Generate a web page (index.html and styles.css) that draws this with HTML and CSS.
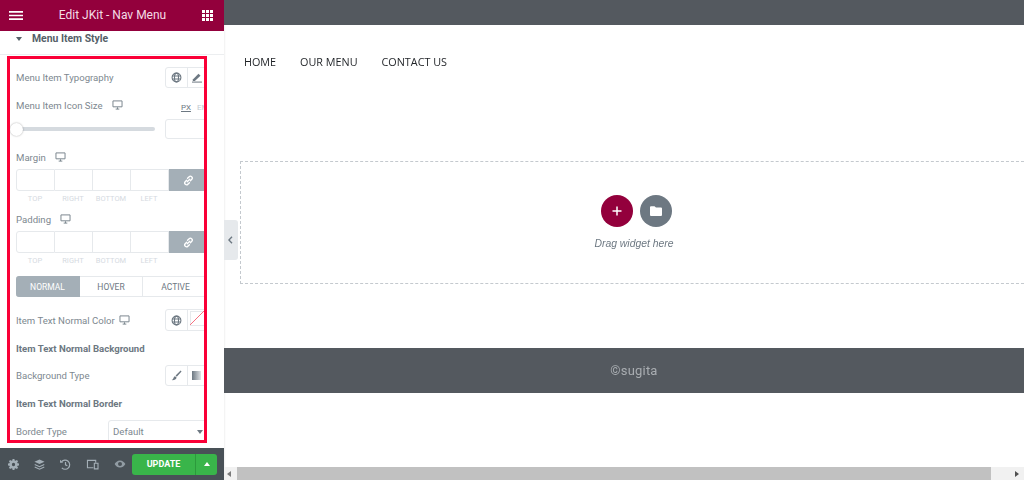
FILE: index.html
```html
<!DOCTYPE html>
<html lang="en">
<head>
<meta charset="utf-8">
<title>Edit JKit - Nav Menu</title>
<link rel="stylesheet" href="styles.css">
</head>
<body>
<svg class="defs" width="0" height="0" aria-hidden="true">
  <symbol id="i-monitor" viewBox="0 0 12 11"><path d="M1 1h10v6.5H1z" fill="none" stroke="currentColor" stroke-width="1.1"/><path d="M4 10h4M6 8v2" stroke="currentColor" stroke-width="1.1"/></symbol>
  <symbol id="i-globe" viewBox="0 0 12 12"><g fill="none" stroke="currentColor" stroke-width="1.2"><circle cx="6" cy="6" r="4.8"/><ellipse cx="6" cy="6" rx="2.2" ry="4.8"/><path d="M1.2 4.3h9.6M1.2 7.7h9.6"/></g></symbol>
  <symbol id="i-link" viewBox="0 0 12 12"><g fill="none" stroke="currentColor" stroke-width="1.5" stroke-linecap="round"><path d="M5 3.600 6.700 2a1.900 1.900 0 0 1 2.900 2.600L8 6.300"/><path d="M7 8.400 5.300 10a1.900 1.900 0 0 1-2.900-2.600L4 5.700"/><path d="M4.600 7.400 7.400 4.600"/></g></symbol>
</svg>
<div class="app">
  <aside class="panel">
    <header class="panel-head">
      <svg class="burger" viewBox="0 0 14 9" width="14" height="9"><path d="M0 .9h14M0 4.500h14M0 8.100h14" stroke="#fff" stroke-width="1.700"/></svg>
      <span class="panel-title">Edit JKit - Nav Menu</span>
      <svg class="apps" viewBox="0 0 11 11" width="11" height="11"><path fill="#fff" d="M0 0h3v3H0zM4 0h3v3H4zM8 0h3v3H8zM0 4h3v3H0zM4 4h3v3H4zM8 4h3v3H8zM0 8h3v3H0zM4 8h3v3H4zM8 8h3v3H8z"/></svg>
    </header>
    <div class="section-head"><span class="caret"></span><span>Menu Item Style</span></div>
    <div class="highlight">
      <div class="row row-typo">
        <span class="label">Menu Item Typography</span>
        <div class="btn-pair">
          <span class="pair-cell"><svg width="11" height="11"><use href="#i-globe"/></svg></span>
          <span class="pair-cell"><svg viewBox="0 0 12 12" width="10" height="11"><path d="M1 8.300 7.800 1.500l2.400 2.400L3.400 10.200H1z" fill="currentColor"/><path d="M0 11.500h12" stroke="currentColor" stroke-width="1.200"/></svg></span>
        </div>
      </div>
      <div class="row row-size">
        <span class="label">Menu Item Icon Size</span>
        <svg class="mon" width="11" height="10"><use href="#i-monitor"/></svg>
        <span class="units"><u>PX</u><span>EM</span></span>
      </div>
      <div class="row row-slider">
        <div class="slider"><span class="thumb"></span></div>
        <span class="num"></span>
      </div>
      <div class="row row-dim"><span class="label">Margin</span><svg class="mon" width="11" height="10"><use href="#i-monitor"/></svg></div>
      <div class="dims">
        <span class="dim"></span><span class="dim"></span><span class="dim"></span><span class="dim"></span>
        <span class="dim-link"><svg width="11" height="11"><use href="#i-link"/></svg></span>
      </div>
      <div class="dim-labels"><span>TOP</span><span>RIGHT</span><span>BOTTOM</span><span>LEFT</span></div>
      <div class="row row-dim row-pad"><span class="label">Padding</span><svg class="mon" width="11" height="10"><use href="#i-monitor"/></svg></div>
      <div class="dims">
        <span class="dim"></span><span class="dim"></span><span class="dim"></span><span class="dim"></span>
        <span class="dim-link"><svg width="11" height="11"><use href="#i-link"/></svg></span>
      </div>
      <div class="dim-labels"><span>TOP</span><span>RIGHT</span><span>BOTTOM</span><span>LEFT</span></div>
      <div class="tabs"><span class="tab tab-on">NORMAL</span><span class="tab tab-h">HOVER</span><span class="tab tab-a">ACTIVE</span></div>
      <div class="row row-color">
        <span class="label">Item Text Normal Color</span>
        <svg class="mon mon-tight" width="11" height="10"><use href="#i-monitor"/></svg>
        <div class="btn-pair">
          <span class="pair-cell"><svg width="11" height="11"><use href="#i-globe"/></svg></span>
          <span class="pair-cell pair-swatch"><svg viewBox="0 0 28 20" width="28" height="20"><rect x="2.500" y="1.500" width="30" height="14" fill="none" stroke="#e6e9ec"/><path d="M2 15 16 1" stroke="#f7707f" stroke-width="1"/></svg></span>
        </div>
      </div>
      <div class="subhead sub-bg">Item Text Normal Background</div>
      <div class="row row-bg">
        <span class="label">Background Type</span>
        <div class="btn-pair">
          <span class="pair-cell"><svg viewBox="0 0 12 12" width="11" height="11"><path d="M10.500.5 5 6l1.300 1.300L11.500 1.500zM.5 11c2.500.3 5.300-.3 5.600-2.800L4.400 6.700C2.500 7 3.300 9.800.5 11z" fill="currentColor"/></svg></span>
          <span class="pair-cell"><span class="grad"></span></span>
        </div>
      </div>
      <div class="subhead sub-border">Item Text Normal Border</div>
      <div class="row row-border">
        <span class="label">Border Type</span>
        <span class="select">Default<span class="select-caret"></span></span>
      </div>
    </div>
    <footer class="panel-foot">
      <svg class="fi fi-gear" viewBox="0 0 12 12" width="11" height="11"><path fill-rule="evenodd" d="M5 0h2l.3 1.600 1 .4L9.700 1.100 11 2.400 10 3.700l.4 1L12 5v2l-1.600.3-.4 1 1 1.300L9.700 11l-1.400-1-1 .4L7 12H5l-.3-1.600-1-.4L2.300 11 1 9.600l1-1.300-.4-1L0 7V5l1.600-.3.4-1-1-1.300L2.300 1.100 3.700 2l1-.4zM6 4.200a1.800 1.800 0 1 0 0 3.600 1.800 1.800 0 0 0 0-3.600z" fill="currentColor"/></svg>
      <svg class="fi" viewBox="0 0 12 12" width="11" height="11"><path d="M6 .5 11.500 3 6 5.500.5 3z" fill="currentColor"/><path d="M.8 6 6 8.400 11.200 6M.8 8.800 6 11.200l5.200-2.400" fill="none" stroke="currentColor" stroke-width="1.200"/></svg>
      <svg class="fi" viewBox="0 0 12 12" width="11" height="11"><g fill="none" stroke="currentColor" stroke-width="1.300"><path d="M1.700 3A5 5 0 1 1 2 9.700"/><path d="M6 3.200V6.300l2 1.100"/></g><path d="M0 .8v3.400h3.400z" fill="currentColor"/></svg>
      <svg class="fi" viewBox="0 0 14 12" width="13" height="11"><g fill="none" stroke="currentColor" stroke-width="1.200"><path d="M8 9.500H1.500v-8h9V4"/><path d="M9 4.600h4v6.200H9z"/></g></svg>
      <svg class="fi fi-eye" viewBox="0 0 14 10" width="12" height="8"><path fill-rule="evenodd" d="M7 .5C3.800.5 1.400 2.800.3 5c1.100 2.200 3.500 4.500 6.700 4.500S12.600 7.200 13.700 5C12.600 2.800 10.200.5 7 .5zm0 2a2.500 2.500 0 1 1 0 5 2.500 2.500 0 0 1 0-5z" fill="currentColor"/></svg>
      <div class="update"><span class="update-main">UPDATE</span><span class="update-more"><span class="up-caret"></span></span></div>
    </footer>
  </aside>
  <main class="stage">
    <span class="collapse"><svg viewBox="0 0 5 8" width="5" height="8"><path d="M4 .8.900 4 4 7.200" fill="none" stroke="#6d7882" stroke-width="1.400"/></svg></span>
    <div class="canvas">
      <div class="topbar"></div>
      <nav class="nav"><a>HOME</a><a>OUR MENU</a><a>CONTACT US</a></nav>
      <section class="dropzone">
        <div class="drop-btns">
          <span class="round round-add"><svg viewBox="0 0 10 10" width="10" height="10"><path d="M5 .5v9M.5 5h9" stroke="#fff" stroke-width="1.500"/></svg></span>
          <span class="round round-tpl"><svg viewBox="0 0 12 10" width="12" height="10"><path d="M0 1.200A1 1 0 0 1 1 .2h3.500L6 1.600h5a1 1 0 0 1 1 1V9a1 1 0 0 1-1 1H1a1 1 0 0 1-1-1z" fill="#fff"/></svg></span>
        </div>
        <div class="drop-text">Drag widget here</div>
      </section>
      <div class="sitefoot">©sugita</div>
    </div>
    <div class="hscroll">
      <span class="arrow arrow-l"></span>
      <span class="hthumb"></span>
      <span class="arrow arrow-r"></span>
    </div>
  </main>
</div>
</body>
</html>
```

FILE: styles.css
```css
* { box-sizing: border-box; }
html, body { margin: 0; height: 100%; overflow: hidden; background: #fff; }
body { font-family: Roboto, "Liberation Sans", sans-serif; }
.defs { display: block; height: 0; }
.app { display: flex; width: 1024px; height: 480px; filter: blur(.35px); }

/* Editor panel */
.panel { width: 224px; flex: none; display: flex; flex-direction: column; background: #fff; color: #6d7882; }
.panel-head { height: 31px; flex: none; background: #93003c; color: #fff; display: flex; align-items: center; padding: 0 11px 1px 9px; }
.panel-title { flex: 1; text-align: center; font-size: 12px; color: #f3dde6; }
.section-head { height: 24px; flex: none; display: flex; align-items: flex-start; padding: 2px 0 0 16px; border-bottom: 1px solid #eceef0; font-size: 10.4px; line-height: 12px; font-weight: 700; color: #556068; }
.caret { width: 0; height: 0; border: 3.5px solid transparent; border-top: 4px solid #556068; border-bottom: 0; margin: 4px 10px 0 0; }

.highlight { width: 200px; height: 387px; margin: 1px 0 0 7px; flex: none; border: 3px solid #fa0037; padding-left: 6px; overflow: hidden; }
.row { display: flex; align-items: center; width: 202px; font-size: 9.6px; }
.label { color: #7d8890; font-size: 9.6px; white-space: nowrap; }
.mon { color: #7d8890; margin-left: 9px; flex: none; }
.mon-tight { margin-left: 4px; }

.btn-pair { margin-left: auto; width: 53px; height: 100%; flex: none; display: flex; border: 1px solid #e6e9ec; border-radius: 3px; color: #6d7882; }
.pair-cell { width: 21px; flex: none; display: flex; align-items: center; justify-content: center; }
.pair-cell + .pair-cell { border-left: 1px solid #e6e9ec; width: 30px; justify-content: flex-start; padding-left: 4px; }
.pair-cell.pair-swatch { padding: 0; align-items: flex-start; }
.grad { width: 9px; height: 9px; background: linear-gradient(90deg, #6d7882, #dfe2e5); }

.row-typo { height: 21px; margin-top: 8px; }
.row-size { height: 12px; margin-top: 11px; }
.units { margin-left: auto; display: flex; gap: 6px; width: 37px; padding-top: 4px; font-size: 8px; color: #6d7882; white-space: nowrap; flex: none; }
.units span { color: #c2cbd2; }
.row-slider { height: 20px; margin-top: 8px; width: 210px; }
.slider { width: 139px; height: 4px; background: #d5dadf; border-radius: 2px; position: relative; flex: none; }
.thumb { position: absolute; left: -6px; top: -4px; width: 13px; height: 13px; border-radius: 50%; background: #fff; box-shadow: 0 0 2px rgba(0,0,0,.35); }
.num { width: 46px; height: 20px; margin-left: 10px; border: 1px solid #e6e9ec; border-radius: 3px; flex: none; }

.row-dim { height: 12px; margin-top: 12px; }
.row-pad { margin-top: 8px; }
.dims { display: flex; height: 22px; width: 210px; margin-top: 6px; }
.dim { width: 38px; border: 1px solid #e6e9ec; border-left-width: 0; flex: none; }
.dim:first-child { width: 39px; border-left-width: 1px; border-radius: 3px 0 0 3px; }
.dim-link { width: 50px; background: #a4afb7; color: #fff; display: flex; align-items: center; padding-left: 14px; flex: none; }
.dim-labels { display: flex; height: 12px; margin-top: 2px; font-size: 7.5px; color: #d5dadf; line-height: 12px; }
.dim-labels span { width: 38px; text-align: center; flex: none; }

.tabs { display: flex; width: 210px; height: 21px; margin-top: 9px; font-size: 8.5px; }
.tab { display: flex; align-items: center; justify-content: center; border: 1px solid #e6e9ec; border-left: 0; color: #6d7882; flex: none; }
.tab-on { width: 64px; background: #a4afb7; border-color: #a4afb7; color: #fff; border-radius: 3px 0 0 3px; }
.tab-h { width: 63px; }
.tab-a { width: 66px; }

.row-color { height: 22px; margin-top: 12px; }
.subhead { font-size: 9.6px; font-weight: 700; color: #6d7882; line-height: 12px; }
.sub-bg { margin-top: 12px; }
.row-bg { height: 21px; margin-top: 10px; }
.sub-border { margin-top: 12px; }
.row-border { height: 22px; margin-top: 10px; }
.select { margin-left: auto; width: 110px; height: 22px; border: 1px solid #e6e9ec; border-radius: 3px 3px 0 0; color: #7d8890; font-size: 9.6px; display: flex; align-items: center; padding-left: 4px; flex: none; position: relative; }
.select-caret { position: absolute; left: 88px; top: 9px; border: 3.5px solid transparent; border-top: 4px solid #6d7882; border-bottom: 0; }

.panel-foot { margin-top: auto; height: 32px; flex: none; background: #495157; color: #a4afb7; display: flex; align-items: center; padding: 0 7px 0 8px; }
.fi { flex: none; margin-right: 15px; }
.fi-eye { margin-right: 0; opacity: .8; }
.update { margin-left: auto; width: 85px; height: 21px; display: flex; border-radius: 3px; overflow: hidden; background: #39b54a; color: #fff; flex: none; }
.update-main { width: 64px; display: flex; align-items: center; justify-content: center; font-size: 9px; font-weight: 700; border-right: 1px solid #2c9a3c; }
.update-more { flex: 1; display: flex; align-items: center; justify-content: center; }
.up-caret { border: 3.5px solid transparent; border-bottom: 4px solid #fff; border-top: 0; }

/* Preview */
.stage { flex: 1; min-width: 0; display: flex; flex-direction: column; position: relative; box-shadow: inset 2px 0 2px -1px rgba(0,0,0,.06); }
.collapse { position: absolute; left: 0; top: 220px; width: 14px; height: 40px; padding-right: 2px; background: #e6e9ec; border-radius: 0 3px 3px 0; display: flex; align-items: center; justify-content: center; z-index: 2; }
.canvas { flex: 1; min-height: 0; overflow: hidden; }
.topbar { height: 25px; background: #54595f; }
.nav { display: flex; gap: 24px; height: 123px; padding: 29px 0 0 20px; font-family: "Open Sans", sans-serif; font-size: 10.8px; line-height: 16px; color: #1f2226; }
.nav a { color: inherit; }
.dropzone { margin: 13px -20px 0 16px; height: 123px; border: 1px dashed #c4c9ce; display: flex; flex-direction: column; align-items: center; padding: 33px 12px 0 0; }
.drop-btns { display: flex; gap: 7px; }
.round { width: 32px; height: 32px; border-radius: 50%; display: flex; align-items: center; justify-content: center; }
.round-add { background: #93003c; }
.round-tpl { background: #6d7882; }
.drop-text { margin-top: 10px; margin-left: -4px; font-family: "Liberation Sans", sans-serif; font-style: italic; font-size: 10.4px; line-height: 14px; color: #6d7882; }
.sitefoot { margin: 64px -20px 0 0; height: 45px; background: #54595f; color: #a9adb1; display: flex; align-items: center; justify-content: center; font-size: 13px; letter-spacing: .2px; }
.hscroll { height: 13px; flex: none; background: #f1f1f1; display: flex; align-items: center; }
.arrow { width: 0; height: 0; flex: none; border: 3px solid transparent; }
.arrow-l { border-right: 4px solid #7a7a7a; border-left: 0; margin-left: 3px; margin-right: 6px; }
.arrow-r { border-left: 4px solid #505050; border-right: 0; margin-left: 24px; }
.hthumb { width: 754px; height: 13px; background: #c1c1c1; flex: none; }
```
